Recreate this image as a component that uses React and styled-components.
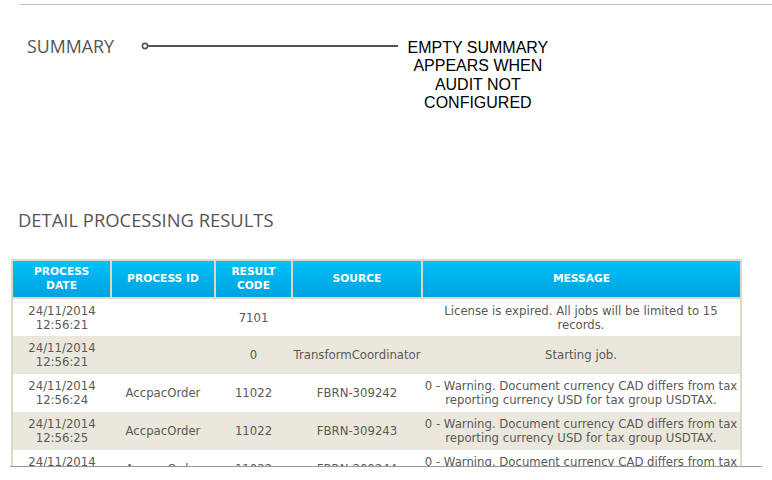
import React from "react";
import styled, { createGlobalStyle } from "styled-components";

const Global = createGlobalStyle`
  html, body { margin: 0; padding: 0; background: #fff; }
  body { font-family: "DejaVu Sans", Verdana, sans-serif; }
`;

const Page = styled.div`
  width: 772px;
  height: 480px;
  overflow: hidden;
  padding-top: 4px;
  box-sizing: border-box;
`;

const TopRule = styled.div`
  margin-left: 20px;
  border-top: 1px solid #bdbdbd;
`;

const SummaryRow = styled.div`
  display: flex;
  align-items: flex-start;
  margin-top: 30px;
  padding-left: 27px;
`;

const SectionTitle = styled.h2`
  margin: 0;
  font-family: "Open Sans", sans-serif;
  font-weight: 400;
  font-size: ${(p) => p.$size}px;
  line-height: 22px;
  color: #555;
`;

const Connector = styled.svg`
  display: block;
  margin-left: 27px;
  margin-top: 7px;
  flex: none;
`;

const Annotation = styled.div`
  width: 160px;
  margin-top: 4px;
  text-align: center;
  font-family: "Liberation Sans Narrow", "Liberation Sans", Arial, sans-serif;
  font-size: 16px;
  line-height: 18.3px;
  color: #000;
`;

const DetailTitle = styled(SectionTitle)`
  margin-top: 97px;
  margin-left: 18px;
`;

const TableFrame = styled.div`
  margin-top: 28px;
  margin-left: 10px;
  width: 752px;
  height: 208px;
  overflow: hidden;
  border-bottom: 1px solid #9a9a9a;
  box-sizing: border-box;
`;

const Table = styled.table`
  margin-left: 1px;
  width: 729px;
  table-layout: fixed;
  border-collapse: collapse;
  border: 2px solid #dcd8c8;
  font-size: 11.7px;
  color: #5a5955;
`;

const Th = styled.th`
  width: ${(p) => p.$w}px;
  height: 38px;
  padding: 0 4px;
  box-sizing: border-box;
  border: 2px solid #dcd8c8;
  background: linear-gradient(#00c0fb, #00a2de);
  color: #fff;
  font-weight: 700;
  font-size: 10.7px;
  line-height: 14px;
  text-align: center;
  vertical-align: middle;
`;

const Tr = styled.tr`
  background: ${(p) => (p.$alt ? "#eae7dc" : "#fff")};
`;

const Td = styled.td`
  height: 38px;
  padding: 0 1px;
  box-sizing: border-box;
  text-align: center;
  vertical-align: middle;
  line-height: 14px;
  white-space: ${(p) => (p.$nowrap ? "nowrap" : "normal")};
`;

const cols = [
  { label: ["PROCESS", "DATE"], w: 99 },
  { label: ["PROCESS ID"], w: 104 },
  { label: ["RESULT", "CODE"], w: 77 },
  { label: ["SOURCE"], w: 130 },
  { label: ["MESSAGE"], w: 319 },
];

const warn = [
  "0 - Warning. Document currency CAD differs from tax",
  "reporting currency USD for tax group USDTAX.",
];

const rows = [
  [["24/11/2014", "12:56:21"], "", "7101", "", ["License is expired. All jobs will be limited to 15", "records."]],
  [["24/11/2014", "12:56:21"], "", "0", "TransformCoordinator", ["Starting job."]],
  [["24/11/2014", "12:56:24"], "AccpacOrder", "11022", "FBRN-309242", warn],
  [["24/11/2014", "12:56:25"], "AccpacOrder", "11022", "FBRN-309243", warn],
  [["24/11/2014", "12:56:26"], "AccpacOrder", "11022", "FBRN-309244", warn],
];

const Lines = ({ items }) =>
  items.map((l, j) => (
    <React.Fragment key={j}>
      {j > 0 && <br />}
      {l}
    </React.Fragment>
  ));

export default function App() {
  return (
    <Page>
      <Global />
      <TopRule />
      <SummaryRow>
        <SectionTitle $size={17.8}>SUMMARY</SectionTitle>
        <Connector width="257" height="8" viewBox="0 0 257 8">
          <circle cx="4" cy="4" r="2.6" fill="#fff" stroke="#555" strokeWidth="1.6" />
          <line x1="6.6" y1="4" x2="257" y2="4" stroke="#555" strokeWidth="2" />
        </Connector>
        <Annotation>
          <Lines items={["EMPTY SUMMARY", "APPEARS WHEN", "AUDIT NOT", "CONFIGURED"]} />
        </Annotation>
      </SummaryRow>
      <DetailTitle $size={18.4}>DETAIL PROCESSING RESULTS</DetailTitle>
      <TableFrame>
        <Table>
          <thead>
            <tr>
              {cols.map((c, i) => (
                <Th key={i} $w={c.w}>
                  <Lines items={c.label} />
                </Th>
              ))}
            </tr>
          </thead>
          <tbody>
            {rows.map((r, i) => (
              <Tr key={i} $alt={i % 2 === 1}>
                <Td $nowrap><Lines items={r[0]} /></Td>
                <Td>{r[1]}</Td>
                <Td>{r[2]}</Td>
                <Td $nowrap>{r[3]}</Td>
                <Td $nowrap><Lines items={r[4]} /></Td>
              </Tr>
            ))}
          </tbody>
        </Table>
      </TableFrame>
    </Page>
  );
}
